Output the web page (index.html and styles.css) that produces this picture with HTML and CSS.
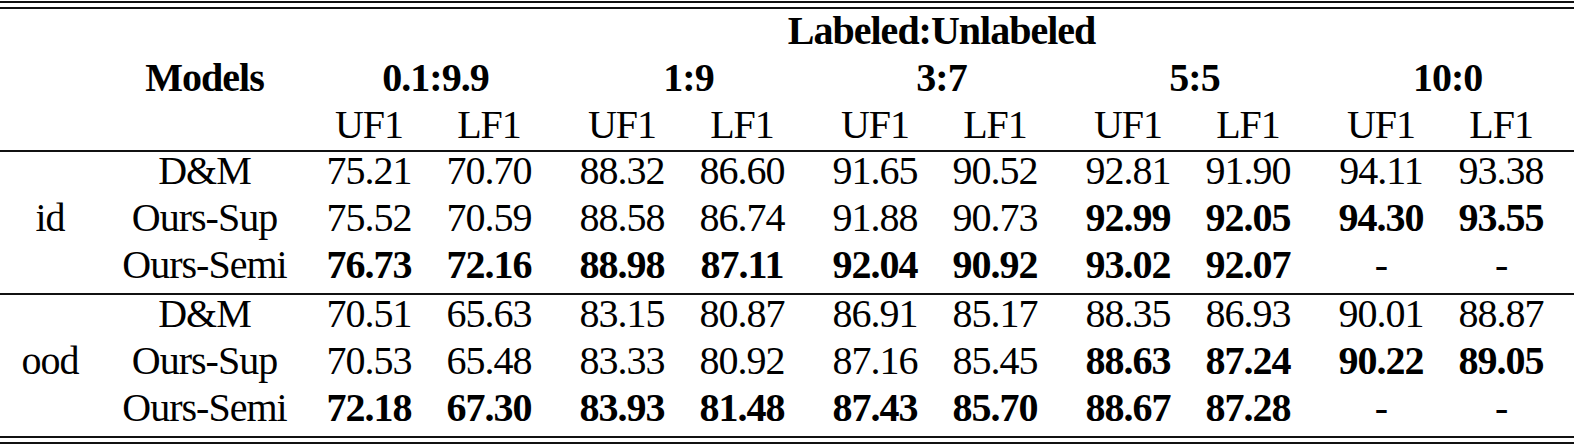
FILE: index.html
```html
<!DOCTYPE html>
<html>
	<head>
		<meta charset="UTF-8">
		<title>Labeled:Unlabeled</title>
		<link rel="stylesheet" href="styles.css">
	</head>

	<body>
		<div class="frame">
			<table class="results">
				<colgroup>
					<col class="c-split">
					<col class="c-model">
					<col class="c-uf"><col class="c-lf">
					<col class="c-uf"><col class="c-lf">
					<col class="c-uf"><col class="c-lf">
					<col class="c-uf"><col class="c-lf">
					<col class="c-uf"><col class="c-lf">
				</colgroup>
				<thead>
					<tr>
						<th></th>
						<th></th>
						<th colspan="10" class="strong">Labeled:Unlabeled</th>
					</tr>
					<tr>
						<th></th>
						<th class="strong">Models</th>
						<th colspan="2" class="strong">0.1:9.9</th>
						<th colspan="2" class="strong">1:9</th>
						<th colspan="2" class="strong">3:7</th>
						<th colspan="2" class="strong">5:5</th>
						<th colspan="2" class="strong">10:0</th>
					</tr>
					<tr>
						<th></th>
						<th></th>
						<th>UF1</th><th class="lf">LF1</th>
						<th>UF1</th><th class="lf">LF1</th>
						<th>UF1</th><th class="lf">LF1</th>
						<th>UF1</th><th class="lf">LF1</th>
						<th>UF1</th><th class="lf">LF1</th>
					</tr>
				</thead>

				<!-- in-domain -->
				<tbody>
					<tr>
						<td rowspan="3">id</td>
						<td>D&amp;M</td>
						<td>75.21</td><td class="lf">70.70</td>
						<td>88.32</td><td class="lf">86.60</td>
						<td>91.65</td><td class="lf">90.52</td>
						<td>92.81</td><td class="lf">91.90</td>
						<td>94.11</td><td class="lf">93.38</td>
					</tr>
					<tr>
						<td>Ours-Sup</td>
						<td>75.52</td><td class="lf">70.59</td>
						<td>88.58</td><td class="lf">86.74</td>
						<td>91.88</td><td class="lf">90.73</td>
						<td class="strong">92.99</td><td class="lf strong">92.05</td>
						<td class="strong">94.30</td><td class="lf strong">93.55</td>
					</tr>
					<tr>
						<td>Ours-Semi</td>
						<td class="strong">76.73</td><td class="lf strong">72.16</td>
						<td class="strong">88.98</td><td class="lf strong">87.11</td>
						<td class="strong">92.04</td><td class="lf strong">90.92</td>
						<td class="strong">93.02</td><td class="lf strong">92.07</td>
						<td>-</td><td class="lf">-</td>
					</tr>
				</tbody>

				<!-- out-of-domain -->
				<tbody>
					<tr>
						<td rowspan="3">ood</td>
						<td>D&amp;M</td>
						<td>70.51</td><td class="lf">65.63</td>
						<td>83.15</td><td class="lf">80.87</td>
						<td>86.91</td><td class="lf">85.17</td>
						<td>88.35</td><td class="lf">86.93</td>
						<td>90.01</td><td class="lf">88.87</td>
					</tr>
					<tr>
						<td>Ours-Sup</td>
						<td>70.53</td><td class="lf">65.48</td>
						<td>83.33</td><td class="lf">80.92</td>
						<td>87.16</td><td class="lf">85.45</td>
						<td class="strong">88.63</td><td class="lf strong">87.24</td>
						<td class="strong">90.22</td><td class="lf strong">89.05</td>
					</tr>
					<tr>
						<td>Ours-Semi</td>
						<td class="strong">72.18</td><td class="lf strong">67.30</td>
						<td class="strong">83.93</td><td class="lf strong">81.48</td>
						<td class="strong">87.43</td><td class="lf strong">85.70</td>
						<td class="strong">88.67</td><td class="lf strong">87.28</td>
						<td>-</td><td class="lf">-</td>
					</tr>
				</tbody>
			</table>
		</div>
	</body>
</html>
```

FILE: styles.css
```css
*{
	margin: 0;
	padding: 0;
}

html,body{
	background-color: #fff;
}

body{
	color: #000;
	font-family: "Liberation Serif", "Times New Roman", serif;
	font-size: 40px;
	letter-spacing: -1px;
}

/* outer line of the double rule, top and bottom */
.frame{
	width: 1574px;
	margin-top: 1px;
	padding: 4px 0;
	border-top: 2px solid #111;
	border-bottom: 2px solid #111;
}

.results{
	width: 1574px;
	table-layout: fixed;
	border-collapse: separate;
	border-spacing: 0;
	border-top: 2px solid #111;
	border-bottom: 2px solid #111;
}

.results .c-split{
	width: 100px;
}
.results .c-model{
	width: 209px;
}
.results .c-uf{
	width: 120px;
}
.results .c-lf{
	width: 133px;
}

.results th,.results td{
	text-align: center;
	vertical-align: middle;
	line-height: 38px;
	white-space: nowrap;
	font-weight: normal;
}

.results th{
	padding: 3px 0 6px;
}

.results td{
	padding: 0 0 9px;
}

/* LF1 column carries the gap before the next ratio group */
.results .lf{
	padding-right: 13px;
}

.results .strong{
	font-weight: bold;
}

.results tbody tr:first-child td{
	border-top: 2px solid #111;
}
```
